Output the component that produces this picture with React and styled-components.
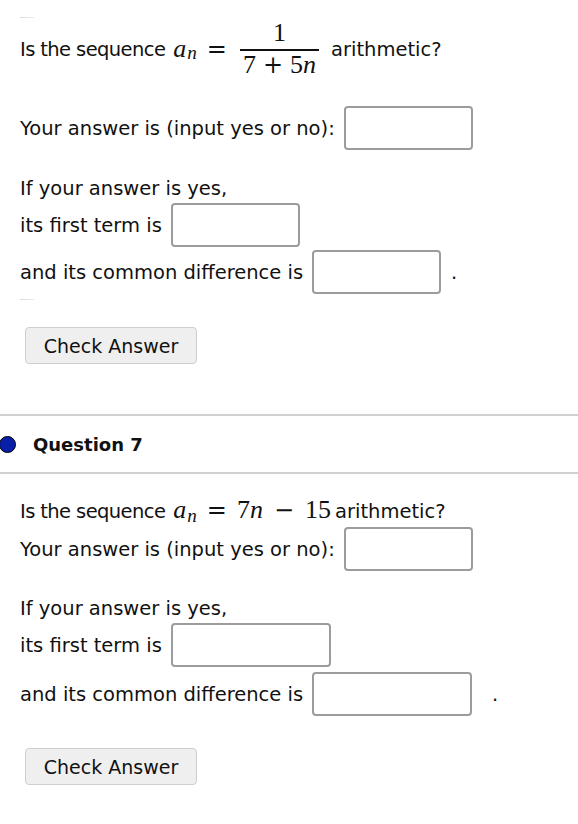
import React from "react";
import styled, { createGlobalStyle } from "styled-components";

const Global = createGlobalStyle`
  html, body { margin: 0; padding: 0; background: #fff; }
  body {
    font-family: "DejaVu Sans", sans-serif;
    font-size: 19.5px;
    color: #111;
  }
`;

const Page = styled.div`
  width: 578px;
  display: flex;
  flex-direction: column;
`;

const Problem = styled.div`
  display: flex;
  flex-direction: column;
  padding-left: 20px;
  padding-top: ${(p) => p.$top || 0}px;
`;

const Tick = styled.div`
  width: 14px;
  height: 1px;
  margin-top: ${(p) => p.$mt || 0}px;
  background: linear-gradient(to right, #d8d8d8, #ececec);
`;

const Row = styled.div`
  display: flex;
  align-items: center;
  height: ${(p) => p.$h || 44}px;
  margin-top: ${(p) => p.$mt || 0}px;
  white-space: pre;
`;

const Line = styled.div`
  display: flex;
  align-items: baseline;
  white-space: pre;
  height: 24px;
  line-height: 24px;
  margin-top: ${(p) => p.$mt || 0}px;
`;

const Lead = styled.span`
  letter-spacing: -0.6px;
`;

const MathSpan = styled.span`
  font-family: "Liberation Serif", "DejaVu Serif", serif;
  font-size: 26px;
  display: inline-flex;
  align-items: ${(p) => (p.$center ? "center" : "baseline")};
  margin: 0 ${(p) => p.$right ?? 8}px 0 8px;
`;

const Var = styled.i`
  font-style: italic;
`;

const Sub = styled.i`
  font-style: italic;
  font-size: 19px;
  position: relative;
  top: 4px;
  margin-left: 1px;
`;

const Op = styled.span`
  font-family: "DejaVu Serif", serif;
  font-size: 24px;
  margin: 0 ${(p) => p.$gap || 10}px;
`;

const Frac = styled.span`
  display: inline-flex;
  flex-direction: column;
  align-items: center;
  margin: 0 3px;
`;

const Num = styled.span`
  display: inline-flex;
  align-items: baseline;
  line-height: 26px;
  padding: 0 3px;
`;

const Bar = styled.span`
  align-self: stretch;
  height: 2px;
  background: #111;
  margin: 3px 0 1px;
`;

const Input = styled.input`
  box-sizing: border-box;
  width: ${(p) => p.$w || 129}px;
  height: 44px;
  margin-left: 9px;
  border: 2px solid #9c9c9c;
  border-radius: 4px;
  background: #fff;
  outline: none;
  font-size: 18px;
`;

const Period = styled.span`
  margin-left: ${(p) => p.$gap || 10}px;
`;

const Button = styled.button`
  box-sizing: border-box;
  align-self: flex-start;
  width: 172px;
  height: 37px;
  margin-left: 5px;
  margin-top: ${(p) => p.$mt || 0}px;
  background: #efefef;
  border: 1.5px solid #cfcfcf;
  border-radius: 4px;
  font-family: inherit;
  font-size: 19px;
  color: #111;
  padding: 0;
`;

const Rule = styled.div`
  height: 2px;
  background: #d0d0d0;
  margin-top: ${(p) => p.$mt || 0}px;
`;

const Header = styled.div`
  display: flex;
  align-items: center;
  height: 56px;
  gap: 17px;
  margin-left: -1px;
`;

const Dot = styled.span`
  box-sizing: border-box;
  width: 17px;
  height: 17px;
  border-radius: 50%;
  background: #0a1fa8;
  border: 1.5px solid #000;
`;

const HeaderTitle = styled.span`
  font-weight: bold;
  font-size: 18px;
`;

export default function App() {
  return (
    <Page>
      <Global />
      <Problem>
        <Tick $mt={17} />
        <Row $h={56} $mt={3}>
          <Lead>Is the sequence</Lead>
          <MathSpan $center $right={9}>
            <Var>a</Var>
            <Sub>n</Sub>
            <Op $gap={10}>=</Op>
            <Frac>
              <Num>1</Num>
              <Bar />
              <Num>
                7<Op $gap={7}>+</Op>5<Var>n</Var>
              </Num>
            </Frac>
          </MathSpan>
          <span>arithmetic?</span>
        </Row>
        <Row $mt={29}>
          <span>Your answer is (input yes or no):</span>
          <Input />
        </Row>
        <Line $mt={27}>If your answer is yes,</Line>
        <Row $mt={2}>
          <span>its first term is</span>
          <Input />
        </Row>
        <Row $mt={3}>
          <span>and its common difference is</span>
          <Input />
          <Period>.</Period>
        </Row>
        <Tick $mt={5} />
        <Button $mt={27}>Check Answer</Button>
      </Problem>
      <Rule $mt={50} />
      <Header>
        <Dot />
        <HeaderTitle>Question 7</HeaderTitle>
      </Header>
      <Rule />
      <Problem $top={24}>
        <Line>
          <Lead>Is the sequence</Lead>
          <MathSpan $right={4}>
            <Var>a</Var>
            <Sub>n</Sub>
            <Op $gap={10}>=</Op>
            7<Var>n</Var>
            <Op $gap={11}>−</Op>
            15
          </MathSpan>
          <span>arithmetic?</span>
        </Line>
        <Row $mt={5}>
          <span>Your answer is (input yes or no):</span>
          <Input />
        </Row>
        <Line $mt={26}>If your answer is yes,</Line>
        <Row $mt={2}>
          <span>its first term is</span>
          <Input $w={160} />
        </Row>
        <Row $mt={5}>
          <span>and its common difference is</span>
          <Input $w={160} />
          <Period $gap={20}>.</Period>
        </Row>
        <Button $mt={32}>Check Answer</Button>
      </Problem>
    </Page>
  );
}
